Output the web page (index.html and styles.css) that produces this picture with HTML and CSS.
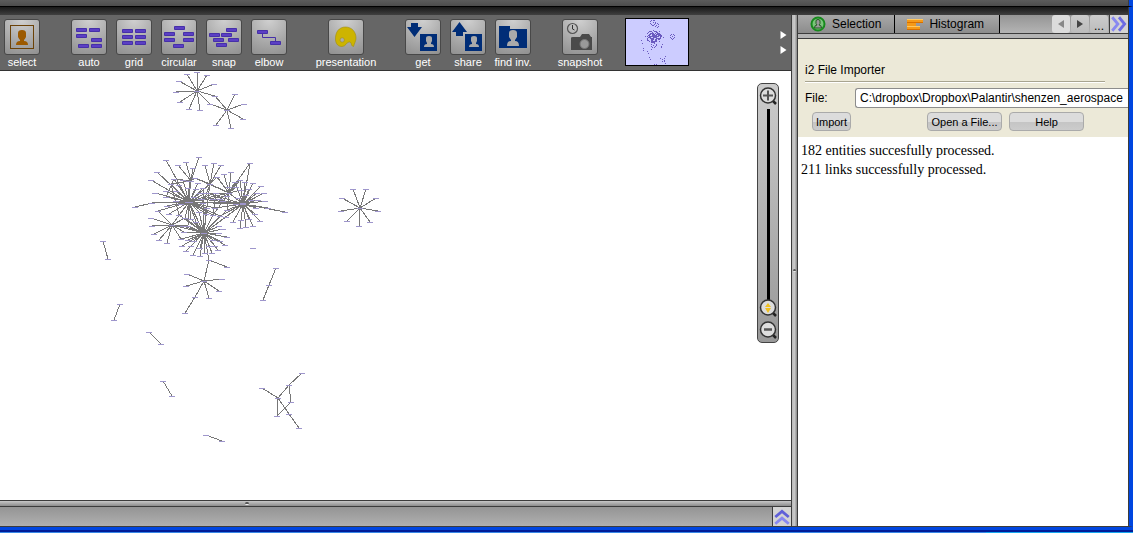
FILE: index.html
```html
<!DOCTYPE html>
<html lang="en">
<head>
    <meta charset="UTF-8">
    <meta name="viewport" content="width=device-width, initial-scale=1.0">
    <title>Graph</title>
    <link rel="stylesheet" href="styles.css">
</head>
<body>
    <div class="title-strip"></div>
    <div class="menu-strip"></div>

    <div class="workspace">
        <div class="graph-side">
            <div class="toolbar">
                <div class="group">
                    <button class="tool">
                        <svg class="tile" viewBox="0 0 34 34"><rect x="5.5" y="5.5" width="23" height="23" fill="none" stroke="#6b4208"/><path d="M13 13q0-3 4-3t4 3v4q-1 2-2 3v1q4 0 4 4H11q0-4 4-4v-1q-1-1-2-3z" fill="#9c5a00"/></svg>
                        <span>select</span>
                    </button>
                </div>
                <div class="group">
                    <button class="tool">
                        <svg class="tile boxes" viewBox="0 0 34 34"><path d="M4.500 8.500h10v3h-10zM17.500 8.500h10v3h-10zM4.500 14.500h10v3h-10zM19.500 18.500h10v3h-10zM6.500 24.500h10v3h-10zM19.500 24.500h10v3h-10z"/></svg>
                        <span>auto</span>
                    </button>
                    <button class="tool">
                        <svg class="tile boxes" viewBox="0 0 34 34"><path d="M5.500 9.500h10v3h-10zM18.500 9.500h10v3h-10zM5.500 15.500h10v3h-10zM18.500 15.500h10v3h-10zM5.500 21.500h10v3h-10zM18.500 21.500h10v3h-10z"/></svg>
                        <span>grid</span>
                    </button>
                    <button class="tool">
                        <svg class="tile boxes" viewBox="0 0 34 34"><path d="M12.500 6.500h10v3h-10zM2.500 12.500h10v3h-10zM21.500 12.500h10v3h-10zM2.500 18.500h10v3h-10zM21.500 18.500h10v3h-10zM11.500 24.500h10v3h-10z"/></svg>
                        <span>circular</span>
                    </button>
                    <button class="tool">
                        <svg class="tile boxes" viewBox="0 0 34 34"><path d="M19.500 8.500h10v3h-10zM2.500 13.500h10v3h-10zM14.500 13.500h10v3h-10zM6.500 18.500h10v3h-10zM21.500 18.500h10v3h-10zM9.500 23.500h10v3h-10z"/></svg>
                        <span>snap</span>
                    </button>
                    <button class="tool">
                        <svg class="tile boxes" viewBox="0 0 34 34"><path d="M5.500 10.500h10v3h-10zM18.500 21.500h10v3h-10z"/><path d="M10.500 14v3.500h13V21" fill="none"/></svg>
                        <span>elbow</span>
                    </button>
                </div>
                <div class="group">
                    <button class="tool wide">
                        <svg class="tile" viewBox="0 0 34 34"><path fill-rule="evenodd" d="M6.500 20C6 12 10 7 16.500 7 23 7 27 12 27 18c0 3-1.500 5-2.500 8.500-3-.5-1.500-5-4.500-4.500-3 .5-3 4.500-7 4.500S7 24 6.500 20zM11 20a2.200 2.200 0 1 0 4.400 0 2.200 2.200 0 1 0-4.400 0z" fill="#cdb400" stroke="#a08d10" stroke-width=".6"/></svg>
                        <span>presentation</span>
                    </button>
                </div>
                <div class="group">
                    <button class="tool">
                        <svg class="tile" viewBox="0 0 34 34"><path d="M5 3h7v4h4L8.500 17 1 7h4zM14 14h17v17H14z" fill="#002d77"/><path d="M20 18q0-2 3-2t3 2v3l-1 2v1q3 0 3 3H18q0-3 3-3v-1l-1-2z" fill="#aaa"/></svg>
                        <span>get</span>
                    </button>
                    <button class="tool">
                        <svg class="tile" viewBox="0 0 34 34"><path d="M5 16h7v-4h4L8.500 2 1 12h4zM14 14h17v17H14z" fill="#002d77"/><path d="M20 18q0-2 3-2t3 2v3l-1 2v1q3 0 3 3H18q0-3 3-3v-1l-1-2z" fill="#aaa"/></svg>
                        <span>share</span>
                    </button>
                    <button class="tool">
                        <svg class="tile" viewBox="0 0 34 34"><path d="M3 6h11v3h17v19H3z" fill="#002d77"/><path d="M13 13q0-3 4-3t4 3v4l-2 3v1q4 0 4 5H11q0-5 4-5v-1l-2-3z" fill="#aaa"/></svg>
                        <span>find inv.</span>
                    </button>
                </div>
                <div class="group">
                    <button class="tool">
                        <svg class="tile" viewBox="0 0 34 34"><circle cx="9.500" cy="8.500" r="5" fill="none" stroke="#555" stroke-width="1.200"/><path d="M9.500 5v4l2 1" fill="none" stroke="#333"/><path d="M8 18q0-1 2-1h7l2-3h7l2 3h1v13H8z" fill="#4a4a4a"/><circle cx="21.500" cy="24" r="4.500" fill="#999" stroke="#777"/></svg>
                        <span>snapshot</span>
                    </button>
                </div>
                <svg class="overview" id="overview" viewBox="0 0 62 46" shape-rendering="crispEdges" role="img" aria-label="Overview"></svg>
                <div class="more">
                    <button aria-label="More tools"><svg viewBox="0 0 6 8"><path d="M0 0l6 4-6 4z"/></svg></button>
                    <button aria-label="More views"><svg viewBox="0 0 6 8"><path d="M0 0l6 4-6 4z"/></svg></button>
                </div>
            </div>

            <div class="canvas">
                <svg id="graph" class="graph" shape-rendering="crispEdges" role="img" aria-label="Entity graph"></svg>
                <div class="zoom">
                    <button aria-label="Zoom in"><svg viewBox="0 0 18 18"><path d="M13 13l4 4" stroke="#222" stroke-width="2.500"/><circle cx="9" cy="8.500" r="7.500" fill="#ddd" stroke="#333" stroke-width="1.500"/><path d="M4 8.500h10M9 3.500v10" stroke="#555" stroke-width="2"/></svg></button>
                    <input type="range" min="0" max="100" value="0" aria-label="Zoom level">
                    <button aria-label="Zoom out"><svg viewBox="0 0 18 18"><path d="M13 13l4 4" stroke="#222" stroke-width="2.500"/><circle cx="9" cy="8.500" r="7.500" fill="#ddd" stroke="#333" stroke-width="1.500"/><path d="M5 8.500h8" stroke="#555" stroke-width="2.500"/></svg></button>
                </div>
            </div>

            <div class="split-h"><span></span></div>
            <div class="drawer">
                <button class="chevrons" aria-label="Open drawer"><svg viewBox="0 0 16 16"><path d="M2 8l6-5 6 5" stroke="#6060d8"/><path d="M2 14l6-5 6 5" stroke="#8888f0"/></svg></button>
            </div>
        </div>

        <div class="split-v"><span></span></div>

        <div class="helper">
            <div class="tabs">
                <button class="tab">
                    <svg viewBox="0 0 16 16"><circle cx="8" cy="8" r="6.500" fill="#7ac47a" stroke="#168a1c" stroke-width="2"/><path d="M6 5q0-1.500 2-1.500T10 5v2.500L9 9q2.500 0 2.500 3h-7Q4.500 9 7 9L6 7.500z" fill="#999" stroke="#245c24"/></svg>
                    Selection
                </button>
                <button class="tab">
                    <svg viewBox="0 0 16 16"><path d="M0 3h16v4H0zM0 7h9v3H0zM0 10h13v4H0z" fill="#f59a18"/><path d="M0 3.500h16M0 10.500h13" stroke="#ffc860"/><path d="M0 6.500h16M0 13.500h13" stroke="#d87000"/></svg>
                    Histogram
                </button>
                <div class="tab-nav">
                    <button aria-label="Previous tab"><svg viewBox="0 0 6 8"><path d="M6 0L0 4l6 4z" fill="#888"/></svg></button>
                    <button aria-label="Next tab"><svg viewBox="0 0 6 8"><path d="M0 0l6 4-6 4z" fill="#444"/></svg></button>
                    <button class="dots">...</button>
                    <button class="chevrons" aria-label="Collapse panel"><svg viewBox="0 0 16 16"><path d="M2 2l5 6-5 6" stroke="#8888f0"/><path d="M8 2l5 6-5 6" stroke="#6c6ce4"/></svg></button>
                </div>
            </div>
            <div class="tab-base"></div>
            <div class="importer">
                <h1>i2 File Importer</h1>
                <div class="file-row">
                    <label for="file">File:</label>
                    <input id="file" type="text" value="C:\dropbox\Dropbox\Palantir\shenzen_aerospace">
                </div>
                <div class="actions">
                    <button class="import">Import</button>
                    <button>Open a File...</button>
                    <button>Help</button>
                </div>
            </div>
            <div class="log">
                <p>182 entities succesfully processed.</p>
                <p>211 links successfully processed.</p>
            </div>
        </div>
    </div>
    <div class="taskbar"></div>

    <script src="graph.js"></script>
</body>
</html>
```
FILE: styles.css
```css
:root {
    --line: #3c3c3c;
    --toolbar: #666;
    --panel: #ece9d8;
    --window-blue: #0046e0;
}

* {
    box-sizing: border-box;
}

body {
    margin: 0;
    height: 100vh;
    display: flex;
    flex-direction: column;
    overflow: hidden;
    background: var(--toolbar);
    font-family: "Liberation Sans", Arial, sans-serif;
    font-size: 12px;
    color: #000;
}

button {
    margin: 0;
    padding: 0;
    border: none;
    background: none;
    font: inherit;
    color: inherit;
}

svg {
    display: block;
}

/* window frame */
.title-strip,
.menu-strip,
.workspace {
    border-right: 4px solid var(--window-blue);
    box-shadow: inset -1px 0 var(--line);
}

.title-strip {
    flex: none;
    height: 6px;
    background: linear-gradient(#5c5c5c, #4c4c4c);
}

.menu-strip {
    flex: none;
    height: 9px;
    border-top: 1px solid #000;
    background: linear-gradient(#181818, #404040);
}

.workspace {
    flex: 1;
    min-height: 0;
    display: flex;
    border-bottom: 1px solid var(--line);
}

.taskbar {
    flex: none;
    height: 6px;
    background:
        linear-gradient(var(--window-blue) 3px, #001c98 3px, #001c98 5px, transparent 5px),
        linear-gradient(to right, #3888e8 87%, #18a8f0 87%);
}

.graph-side {
    flex: 1;
    min-width: 0;
    display: flex;
    flex-direction: column;
}

/* toolbar */
.toolbar {
    flex: none;
    height: 56px;
    display: flex;
    align-items: flex-start;
    gap: 23px;
    padding-top: 4px;
    background: var(--toolbar);
    border-bottom: 1px solid #333;
}

.group {
    display: flex;
    gap: 1px;
}

.tool {
    width: 44px;
    display: flex;
    flex-direction: column;
    align-items: center;
    color: #fff;
    font-size: 11px;
    line-height: 14px;
    white-space: nowrap;
}

.tool.wide {
    width: 64px;
}

.tile {
    width: 36px;
    height: 36px;
    border: 1px solid #484848;
    border-radius: 3px;
    background: radial-gradient(circle at 50% 0, #d0d0d0, #a8a8a8 60%, #909090);
}

.boxes path {
    fill: #5b3fc4;
    stroke: #4630a8;
}

.boxes path[fill="none"] {
    fill: none;
}

.overview {
    width: 64px;
    height: 48px;
    margin-top: -1px;
    background: #ccf;
    border: 1px solid #000;
}

.overview rect {
    fill: #6a5ac0;
}

.more {
    display: flex;
    flex-direction: column;
    gap: 7px;
    margin: 12px 4px 0 auto;
}

.more svg {
    width: 7px;
    height: 8px;
    fill: #fff;
}

/* graph canvas */
.canvas {
    flex: 1;
    min-height: 0;
    position: relative;
    background: #fff;
}

.graph {
    width: 100%;
    height: 100%;
}

.graph line {
    stroke: #777;
}

.graph rect {
    fill: #9e96cc;
}

.zoom {
    position: absolute;
    top: 12px;
    right: 12px;
    width: 22px;
    height: 260px;
    display: flex;
    flex-direction: column;
    align-items: center;
    justify-content: space-between;
    padding: 3px 0;
    border: 1px solid #444;
    border-radius: 5px;
    background: linear-gradient(#ccc, #999);
}

.zoom svg {
    width: 18px;
    height: 18px;
}

.zoom input {
    appearance: none;
    writing-mode: vertical-lr;
    direction: rtl;
    width: 18px;
    height: 208px;
    margin: 0;
    background: linear-gradient(#000, #000) top / 3px 192px no-repeat;
}

.zoom input::-webkit-slider-thumb {
    appearance: none;
    width: 18px;
    height: 18px;
    background: url("data:image/svg+xml,%3Csvg xmlns='http://www.w3.org/2000/svg' viewBox='0 0 18 18'%3E%3Cpath d='M13 13l4 4' stroke='%23222' stroke-width='2.500'/%3E%3Ccircle cx='9' cy='8.500' r='7.500' fill='%23ddd' stroke='%23333' stroke-width='1.500'/%3E%3Cpath d='M9 4l3 4H6zM6 9h6l-3 5z' fill='%23f0c020'/%3E%3C/svg%3E");
}

/* splitters and drawer */
.split-h {
    flex: none;
    height: 7px;
    display: flex;
    border: solid var(--line);
    border-width: 1px 0;
    background: linear-gradient(#c8c8c8, #8c8c8c);
}

.split-h span {
    width: 4px;
    height: 3px;
    margin: 1px 0 0 31%;
    border-bottom: 1px solid #eee;
    border-radius: 2px;
    background: #555;
}

.split-v {
    flex: none;
    width: 7px;
    display: flex;
    align-items: center;
    justify-content: center;
    border: solid var(--line);
    border-width: 0 1px;
    background: linear-gradient(to right, #bbb, #c8c8c8, #888);
}

.split-v span {
    width: 3px;
    height: 3px;
    border-bottom: 1px solid #eee;
    border-radius: 2px;
    background: #555;
}

.drawer {
    flex: none;
    height: 19px;
    display: flex;
    justify-content: flex-end;
    background: linear-gradient(#949494, #b0b0b0);
}

.chevrons {
    width: 19px;
    border-left: 1px solid var(--line);
    background: #d4d4d4;
}

.chevrons svg {
    width: 18px;
    height: 18px;
    fill: none;
    stroke-width: 2.500;
}

/* right panel */
.helper {
    flex: none;
    width: 331px;
    display: flex;
    flex-direction: column;
    overflow: hidden;
    background: #fff;
    border-right: 1px solid var(--line);
}

.tabs {
    flex: none;
    height: 19px;
    display: flex;
    background: linear-gradient(#959595, #b4b4b4);
    border-bottom: 1px solid var(--line);
}

.tab {
    display: flex;
    align-items: center;
    gap: 6px;
    padding: 0 13px 0 12px;
    border-right: 1px solid #000;
    background: linear-gradient(#a8a8a8, #8c8c8c);
}

.tab svg {
    width: 16px;
    height: 16px;
}

.tab + .tab {
    padding-right: 15px;
}

.tab-nav {
    display: flex;
    gap: 1px;
    margin-left: auto;
}

.tab-nav button {
    width: 18px;
    display: flex;
    align-items: center;
    justify-content: center;
    border-radius: 3px;
    background: linear-gradient(#ccc, #bbb);
}

.tab-nav button:first-child {
    background: #dcdcdc;
}

.tab-nav svg {
    width: 6px;
    height: 8px;
}

.tab-nav .dots {
    padding-top: 4px;
}

.tab-nav .chevrons {
    width: 19px;
    border-radius: 0;
    background: #d4d4d4;
}

.tab-nav .chevrons svg {
    width: 18px;
    height: 18px;
}

.tab-base {
    flex: none;
    height: 5px;
    background: #b4b4b4;
    border-bottom: 1px solid var(--line);
}

.importer {
    flex: none;
    padding: 24px 0 6px 7px;
    background: var(--panel);
}

.importer h1 {
    margin: 0 23px 6px 0;
    padding-bottom: 3px;
    border-bottom: 1px solid #a8a490;
    box-shadow: 0 1px #fff;
    font-size: 12px;
    font-weight: normal;
    line-height: 15px;
}

.file-row {
    display: flex;
    align-items: center;
}

.file-row label {
    flex: none;
    width: 50px;
}

.file-row input {
    flex: 1;
    min-width: 0;
    height: 20px;
    padding: 0 0 0 4px;
    border: 1px solid #8c8c8c;
    border-right: none;
    border-radius: 3px 0 0 3px;
    background: #fff;
    font: inherit;
}

.actions {
    display: flex;
    gap: 7px;
    margin: 4px 0 0 7px;
}

.actions button {
    width: 75px;
    height: 19px;
    border: 1px solid #aaa;
    border-radius: 4px;
    background: linear-gradient(#dcdcdc 50%, #c4c4c4 50%, #ccc);
    font-size: 11px;
}

.actions .import {
    width: 39px;
    margin-right: 69px;
}

.log {
    padding: 4px 3px;
    font-family: "Liberation Serif", "Times New Roman", serif;
    font-size: 14px;
    line-height: 19px;
}

.log p {
    margin: 0;
}
```
FILE: graph.js
```js
// entities grouped by the hub they link to
const hubs = [
    { at: [197, 20], leaves: [[197,1],[187,3],[207,4],[179,10],[214,13],[176,21],[215,25],[180,31],[189,38],[200,39],[210,33]] },
    { at: [227, 39], leaves: [[235,23],[244,33],[243,48],[231,57],[216,54],[215,25],[210,33]] },
    { at: [360, 137], leaves: [[353,118],[366,118],[342,127],[376,127],[341,140],[378,140],[347,150],[359,155],[370,151]] },
    { at: [189, 131], leaves: [
        [166,89],[157,101],[151,109],[174,108],[171,113],[179,114],[188,117],[196,118],[203,117],[176,120],[166,120],[155,122],
        [152,132],[166,126],[176,130],[167,135],[169,143],[158,140],[179,144],[200,122],[206,122],[216,122],[202,128],[207,137],
        [215,137],[220,145],[199,141],[196,151],[191,148],[185,147],[188,155],[189,110],[183,109],[198,112],[210,113],[213,144],
        [206,143],[229,122],[243,132],[204,162],[172,154],[227,125],[236,133],[181,133],[194,126]
    ] },
    { at: [243, 133], leaves: [
        [250,92],[240,109],[235,111],[245,111],[253,112],[261,115],[257,122],[264,122],[258,129],[265,130],[241,119],[249,118],
        [233,151],[240,157],[246,156],[253,155],[241,149],[249,148],[255,143],[260,150],[256,137],[268,137],[285,141],
        [229,122],[227,139],[226,146],[220,145],[204,162],[213,128],[207,122],[215,137],[201,128],[223,130],[238,127],[246,124],[251,129],[190,131]
    ] },
    { at: [204, 162], leaves: [
        [223,158],[227,166],[219,162],[225,174],[218,179],[212,182],[220,170],[209,175],[205,182],[200,185],[193,184],[186,180],
        [182,175],[191,175],[184,161],[200,177],[181,168],[196,151],[191,148],[185,147],[188,155],[213,144],[220,145],[206,143],
        [199,141],[226,146],[219,155],[183,155],[194,170],[213,169],[215,175],[188,169],[207,137],[179,144],[209,189],[172,154]
    ] },
    { at: [229, 122], leaves: [[217,106],[224,103],[231,101],[240,109],[229,116],[235,111],[250,92],[210,113],[216,122],[206,122],[227,139],[241,119],[220,128],[236,116],[195,107]] },
    { at: [172, 154], leaves: [[151,147],[152,155],[154,163],[159,169],[167,172],[158,140],[181,168],[184,161],[185,147],[188,155]] },
    { at: [191, 110], leaves: [[178,94],[186,91],[199,86],[193,97],[195,107],[188,131],[183,109],[174,108]] },
    { at: [210, 113], leaves: [[205,94],[214,92],[221,94],[217,106],[195,107],[203,132]] },
    { at: [204, 210], leaves: [[187,203],[186,215],[222,208],[219,220],[209,227],[195,226],[209,189]] },
    { at: [278, 327], leaves: [[262,317],[289,314],[277,345],[289,343]] }
];

// links outside the hubs
const links = [
    [152,132,135,136], [209,189,227,196], [195,226,185,242],
    [103,170,108,188], [120,233,114,249], [149,261,161,273], [163,310,172,325], [206,364,222,370],
    [276,197,269,214], [269,214,263,229],
    [289,314,302,302], [289,314,291,331], [277,345,291,331], [289,343,299,357],
    [203,117,204,162], [202,128,206,143], [216,122,213,144], [171,113,179,144], [210,113,206,143],
    [229,122,213,144], [227,139,204,162], [174,108,166,126], [171,113,189,110]
];

const lone = [[253, 177]];

const graph = document.getElementById('graph');
const overview = document.getElementById('overview');
const nodes = new Map();
let lines = '';

function addNode(x, y) {
    nodes.set(`${x},${y}`, [x, y]);
}

function addLink(x1, y1, x2, y2) {
    lines += `<line x1="${x1}" y1="${y1}" x2="${x2}" y2="${y2}"/>`;
    addNode(x1, y1);
    addNode(x2, y2);
}

hubs.forEach(({ at, leaves }) => {
    leaves.forEach(([x, y]) => addLink(at[0], at[1], x, y));
});
links.forEach(link => addLink(...link));
lone.forEach(([x, y]) => addNode(x, y));

const all = [...nodes.values()];
graph.innerHTML = lines + all.map(([x, y]) => `<rect x="${x - 3}" y="${y}" width="6" height="1"/>`).join('');

const scale = 0.12;
overview.innerHTML = all.map(([x, y]) =>
    `<rect x="${Math.round(x * scale + 3)}" y="${Math.round(y * scale + 1)}" width="1" height="1"/>`
).join('');
```
